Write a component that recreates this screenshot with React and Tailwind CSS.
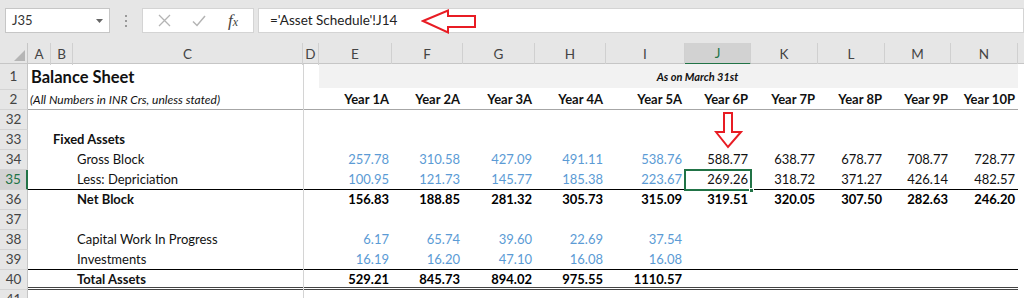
import React from 'react';

const GRID =
  'grid grid-cols-[23px_22px_230px_16px_73px_71px_72px_71px_79px_66px_67px_67px_66px_67px]';

const BLUE = 'text-[#5b9bd5]';

const rows = [
  { n: 34, label: 'Gross Block', values: ['257.78', '310.58', '427.09', '491.11', '538.76', '588.77', '638.77', '678.77', '708.77', '728.77'], actual: 5 },
  { n: 35, label: 'Less: Depriciation', values: ['100.95', '121.73', '145.77', '185.38', '223.67', '269.26', '318.72', '371.27', '426.14', '482.57'], actual: 5, line: 'border-b border-black', selected: true },
  { n: 36, label: 'Net Block', bold: true, values: ['156.83', '188.85', '281.32', '305.73', '315.09', '319.51', '320.05', '307.50', '282.63', '246.20'], actual: 0 },
  { n: 37, label: '', values: [] },
  { n: 38, label: 'Capital Work In Progress', values: ['6.17', '65.74', '39.60', '22.69', '37.54'], actual: 5 },
  { n: 39, label: 'Investments', values: ['16.19', '16.20', '47.10', '16.08', '16.08'], actual: 5, line: 'border-b border-black' },
  { n: 40, label: 'Total Assets', bold: true, values: ['529.21', '845.73', '894.02', '975.55', '1110.57'], actual: 0, line: 'border-b-[3px] border-double border-[#444]' },
];

const years = ['Year 1A', 'Year 2A', 'Year 3A', 'Year 4A', 'Year 5A', 'Year 6P', 'Year 7P', 'Year 8P', 'Year 9P', 'Year 10P'];
const letters = ['E', 'F', 'G', 'H', 'I', 'J', 'K', 'L', 'M', 'N'];

const RowHead = ({ children, selected, h = 'h-5' }) => (
  <div
    className={`w-[28px] ${h} shrink-0 flex items-center justify-center text-[13.5px] border-b border-[#d4d4d4] ${
      selected
        ? 'bg-[#d2d2d2] text-[#217346] border-r-2 border-r-[#217346]'
        : 'bg-[#e6e6e6] text-[#444] border-r border-r-[#c6c6c6]'
    }`}
  >
    {children}
  </div>
);

const Num = ({ children, className = '' }) => (
  <div className={`flex items-center justify-end pr-[3px] whitespace-nowrap ${className}`}>{children}</div>
);

const FormulaBar = () => (
  <div className="h-[43px] bg-[#e6e6e6] flex items-start pt-[8px] pl-[5px]">
    <div className="w-[105px] h-[25px] bg-white border border-[#c6c6c6] flex items-center justify-between pl-[6px] pr-[6px] text-[13px] text-[#333]">
      <span>J35</span>
      <svg width="7" height="4" viewBox="0 0 7 4">
        <path d="M0 0h7L3.5 4z" fill="#666" />
      </svg>
    </div>
    <div className="w-[32px] h-[25px] flex flex-col items-center justify-center gap-[3px]">
      <span className="w-[2px] h-[2px] bg-[#999]" />
      <span className="w-[2px] h-[2px] bg-[#999]" />
      <span className="w-[2px] h-[2px] bg-[#999]" />
    </div>
    <div className="w-[112px] h-[25px] bg-white border border-[#d4d4d4] flex items-center justify-around px-[4px]">
      <svg width="13" height="13" viewBox="0 0 13 13">
        <path d="M1 1l11 11M12 1L1 12" stroke="#b4b4b4" strokeWidth="1.3" />
      </svg>
      <svg width="14" height="12" viewBox="0 0 14 12">
        <path d="M1 6.5l4 4L13 1" stroke="#b4b4b4" strokeWidth="1.5" fill="none" />
      </svg>
      <span className="font-['Liberation_Serif',serif] italic text-[17px] text-[#444] leading-none">
        f<span className="text-[12px]">x</span>
      </span>
    </div>
    <div className="ml-[4px] flex-1 h-[25px] bg-white border border-[#d4d4d4] flex items-center pl-[11px] text-[13.5px] text-[#222]">
      ='Asset Schedule'!J14
    </div>
  </div>
);

const ColHeader = () => (
  <div className="flex h-[21px] bg-[#e6e6e6] border-b border-[#c6c6c6] text-[13.5px] text-[#444]">
    <div className="w-[28px] shrink-0 relative border-r border-[#c6c6c6]">
      <svg className="absolute right-[2px] bottom-[2px]" width="11" height="11" viewBox="0 0 11 11">
        <path d="M11 0v11H0z" fill="#b5b5b5" />
      </svg>
    </div>
    <div className={`${GRID} w-[990px]`}>
      {['A', 'B', 'C', 'D'].map((l) => (
        <div key={l} className="flex items-center justify-center border-r border-[#d0d0d0]">{l}</div>
      ))}
      {letters.map((l) =>
        l === 'J' ? (
          <div key={l} className="flex items-center justify-center bg-[#d2d2d2] text-[#217346] border-r border-[#d0d0d0] border-b-2 border-b-[#217346]">{l}</div>
        ) : (
          <div key={l} className="flex items-center justify-center border-r border-[#d0d0d0]">{l}</div>
        )
      )}
    </div>
  </div>
);

const Body = ({ children, line = '', h = 'h-5' }) => (
  <div className={`${GRID} w-[990px] ${h} ${line}`}>{children}</div>
);

const DCol = () => <div className="border-l border-[#d4d4d4]" />;

export default function App() {
  return (
    <div className="relative w-[1024px] h-[298px] overflow-hidden bg-white font-['Lato',sans-serif] text-[#111]">
      <FormulaBar />
      <ColHeader />

      {/* row 1 */}
      <div className="flex">
        <RowHead h="h-[26px]">1</RowHead>
        <Body h="h-[26px]">
          <div className="col-span-3 flex items-center pl-[3px] font-bold text-[16.5px] whitespace-nowrap">Balance Sheet</div>
          <DCol />
          <div className="col-span-10 bg-[#f2f2f2] mb-[2px] flex items-end justify-center pl-[58px] pb-[3px] text-[11px] font-bold italic">
            As on March 31st
          </div>
        </Body>
      </div>

      {/* row 2 */}
      <div className="flex">
        <RowHead>2</RowHead>
        <Body line="border-b border-[#a6a6a6]">
          <div className="col-span-3 flex items-center pl-[2px] italic text-[12px] whitespace-nowrap">
            (All Numbers in INR Crs, unless stated)
          </div>
          <DCol />
          {years.map((y) => (
            <Num key={y} className="font-bold text-[13px]">{y}</Num>
          ))}
        </Body>
      </div>

      {/* row 32 */}
      <div className="flex">
        <RowHead>32</RowHead>
        <Body>
          <div className="col-span-3" />
          <DCol />
        </Body>
      </div>

      {/* row 33 */}
      <div className="flex">
        <RowHead>33</RowHead>
        <Body>
          <div />
          <div className="col-span-2 flex items-center pl-[2px] font-bold text-[13px] whitespace-nowrap">Fixed Assets</div>
          <DCol />
        </Body>
      </div>

      {rows.map((r) => (
        <div key={r.n} className="flex">
          <RowHead selected={r.selected}>{r.n}</RowHead>
          <Body line={r.line}>
            <div />
            <div />
            <div className={`flex items-center pl-[4px] text-[13px] whitespace-nowrap ${r.bold ? 'font-bold' : ''}`}>{r.label}</div>
            <DCol />
            {letters.map((l, i) => (
              <Num
                key={l}
                className={`text-[13px] ${r.bold ? 'font-bold text-black' : i < r.actual ? BLUE : 'text-[#111]'} ${
                  r.selected && l === 'J' ? 'relative' : ''
                }`}
              >
                {r.values[i] || ''}
                {r.selected && l === 'J' && (
                  <>
                    <span className="absolute -left-[1px] -top-[1px] -right-[1px] -bottom-[1px] border-2 border-[#217346]" />
                    <span className="absolute -right-[3px] -bottom-[3px] w-[5px] h-[5px] bg-[#217346] border border-white" />
                  </>
                )}
              </Num>
            ))}
          </Body>
        </div>
      ))}

      {/* row 41 */}
      <div className="flex">
        <RowHead>41</RowHead>
        <Body>
          <div className="col-span-3" />
          <DCol />
        </Body>
      </div>

      {/* red arrow in formula bar */}
      <svg className="absolute left-[421px] top-[9px]" width="58" height="26" viewBox="0 0 58 26">
        <path d="M2 12L27 1.5V7H54V18H27V23.5Z" fill="none" stroke="#e81c24" strokeWidth="2" strokeLinejoin="miter" />
      </svg>

      {/* red arrow down to J column */}
      <svg className="absolute left-[714px] top-[112px]" width="30" height="37" viewBox="0 0 30 37">
        <path d="M10 1H18V20H27L14 35L2 20H10Z" fill="none" stroke="#e81c24" strokeWidth="2" strokeLinejoin="miter" />
      </svg>
    </div>
  );
}
